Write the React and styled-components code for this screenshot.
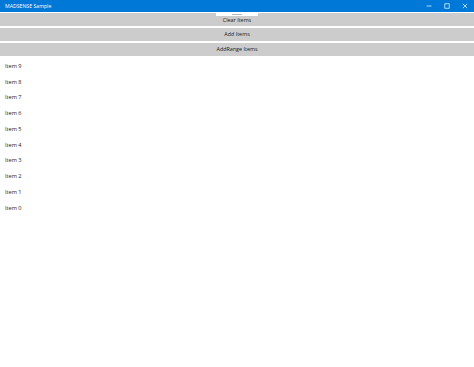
import React from "react";
import styled, { createGlobalStyle } from "styled-components";

const GlobalStyle = createGlobalStyle`
  html, body {
    margin: 0;
    padding: 0;
    background: #ffffff;
  }
  body {
    font-family: "Open Sans", "Noto Sans", "Liberation Sans", Arial, sans-serif;
  }
`;

const Window = styled.div`
  width: 474px;
  height: 367px;
  display: flex;
  flex-direction: column;
  background: #ffffff;
  position: relative;
  overflow: hidden;
`;

const TitleBar = styled.div`
  height: 12px;
  background: #0078d7;
  display: flex;
  align-items: center;
  justify-content: space-between;
  padding-left: 5px;
  flex-shrink: 0;
`;

const Title = styled.span`
  color: #ffffff;
  font-size: 5.2px;
  line-height: 12px;
`;

const Controls = styled.div`
  display: flex;
  height: 12px;
`;

const ControlButton = styled.div`
  width: 18px;
  height: 12px;
  display: flex;
  align-items: center;
  justify-content: center;
`;

const DragHandle = styled.div`
  position: absolute;
  left: 216px;
  top: 12px;
  width: 42px;
  height: 4px;
  background: #ffffff;
  display: flex;
  justify-content: center;
  align-items: center;
  &::after {
    content: "";
    width: 10px;
    height: 1px;
    background: #b8b8b8;
  }
`;

const ButtonStack = styled.div`
  display: flex;
  flex-direction: column;
  gap: 2px;
  padding-top: 0.5px;
`;

const ActionButton = styled.div`
  height: 13px;
  background: #cccccc;
  color: #1a1a1a;
  font-size: 5.4px;
  display: flex;
  align-items: center;
  justify-content: center;
  padding-top: ${(p) => (p.$shift ? "1px" : "0")};
  box-sizing: border-box;
`;

const List = styled.div`
  display: flex;
  flex-direction: column;
  padding-top: 2.5px;
`;

const Row = styled.div`
  height: 15.75px;
  display: flex;
  align-items: center;
  padding-left: 5px;
  font-size: 5.6px;
  color: #1a1a1a;
`;

const items = [9, 8, 7, 6, 5, 4, 3, 2, 1, 0];

export default function App() {
  return (
    <>
      <GlobalStyle />
      <Window>
        <TitleBar>
          <Title>MADSENSE Sample</Title>
          <Controls>
            <ControlButton>
              <svg width="6" height="6" viewBox="0 0 6 6">
                <line x1="0.5" y1="3" x2="5.5" y2="3" stroke="#fff" strokeWidth="0.7" />
              </svg>
            </ControlButton>
            <ControlButton>
              <svg width="6" height="6" viewBox="0 0 6 6">
                <rect x="0.8" y="0.8" width="4.4" height="4.4" fill="none" stroke="#fff" strokeWidth="0.7" />
              </svg>
            </ControlButton>
            <ControlButton>
              <svg width="6" height="6" viewBox="0 0 6 6">
                <path d="M0.8 0.8 L5.2 5.2 M5.2 0.8 L0.8 5.2" stroke="#fff" strokeWidth="0.7" />
              </svg>
            </ControlButton>
          </Controls>
        </TitleBar>
        <ButtonStack>
          <ActionButton $shift>Clear Items</ActionButton>
          <ActionButton>Add Items</ActionButton>
          <ActionButton>AddRange Items</ActionButton>
        </ButtonStack>
        <List>
          {items.map((n) => (
            <Row key={n}>Item {n}</Row>
          ))}
        </List>
        <DragHandle />
      </Window>
    </>
  );
}
